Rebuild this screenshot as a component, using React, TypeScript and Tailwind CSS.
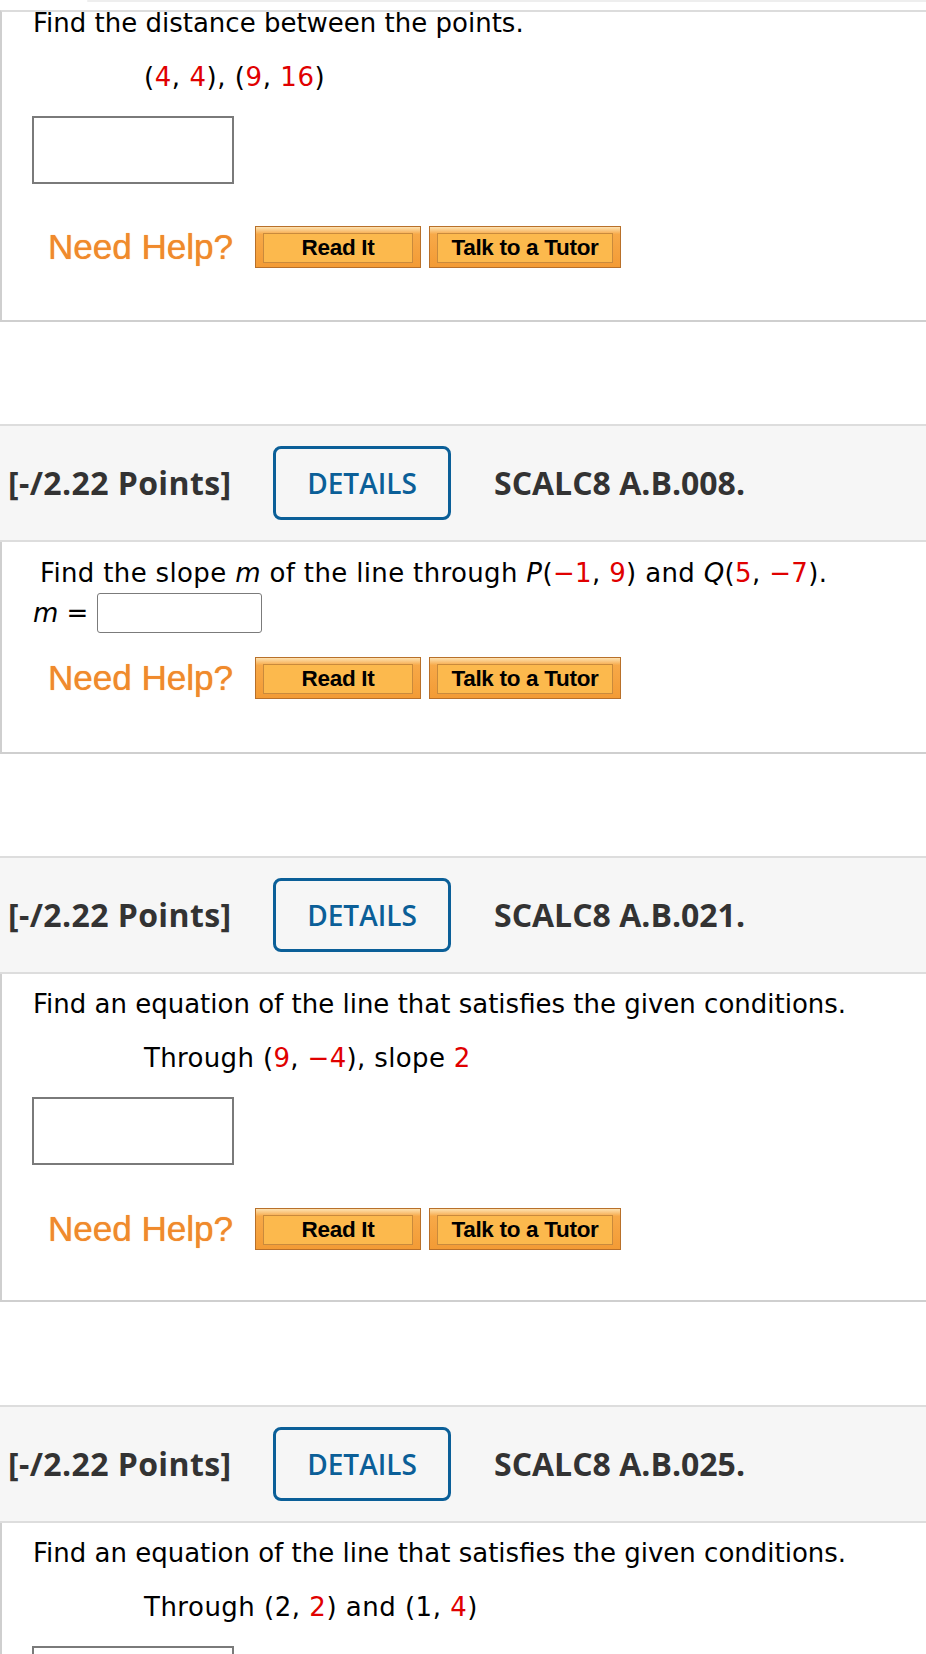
import React from "react";

const R = ({ children }: { children: React.ReactNode }) => (
  <span className="text-[#e00000]">{children}</span>
);

const textCls =
  "font-['DejaVu_Sans',Verdana,sans-serif] text-[26px] text-black whitespace-nowrap";

function OrangeButton({ label, width }: { label: string; width: string }) {
  return (
    <div
      className={`${width} h-[42px] shrink-0 border border-[#b8702a] bg-[linear-gradient(to_bottom,#fde2b2_0%,#f7a948_18%,#f39b35_100%)] pt-[6px] pb-[4px] px-[7px]`}
    >
      <div className="h-full w-full border border-[#c98a3c] bg-[#fcb94d] flex items-center justify-center font-['Liberation_Sans',Arial,sans-serif] font-bold text-[22.5px] text-black leading-none tracking-[-0.3px]">
        {label}
      </div>
    </div>
  );
}

function NeedHelp() {
  return (
    <div className="flex items-center h-[42px]">
      <span className="ml-[46px] w-[207px] shrink-0 font-['Liberation_Sans',Arial,sans-serif] text-[35px] leading-[42px] text-[#f08a2c] [text-shadow:0_0_0.8px_#f08a2c]">
        Need Help?
      </span>
      <OrangeButton label="Read It" width="w-[166px]" />
      <div className="w-[8px] shrink-0" />
      <OrangeButton label="Talk to a Tutor" width="w-[192px]" />
    </div>
  );
}

function Header({ code }: { code: string }) {
  return (
    <div className="h-[118px] border-t-2 border-b-2 border-[#dddddd] bg-[#f6f6f6] flex items-center pl-[8px] font-['Open_Sans',sans-serif]">
      <span className="w-[265px] shrink-0 font-bold text-[32px] tracking-[0.4px] text-[#333333] whitespace-nowrap">
        [-/2.22 Points]
      </span>
      <div className="w-[178px] h-[74px] shrink-0 border-[3px] border-[#0b5f98] rounded-[8px] flex items-center justify-center">
        <span className="font-semibold text-[28px] text-[#0b5f98]">DETAILS</span>
      </div>
      <span className="ml-[43px] font-bold text-[32px] text-[#333333] whitespace-nowrap">
        {code}
      </span>
    </div>
  );
}

function Row({ children, pl, mt }: { children: React.ReactNode; pl: string; mt?: string }) {
  return (
    <div className={`h-[22px] flex items-center ${pl} ${mt ?? ""} ${textCls}`}>
      <span>{children}</span>
    </div>
  );
}

export default function App() {
  return (
    <div className="w-[926px] min-h-[1654px] bg-white overflow-hidden">
      <div className="h-[2px] ml-[87px] bg-[#eeeeee] rounded-l-full" />
      {/* Section 1 body (continuation) */}
      <div className="mt-[8px] border-t-2 border-l-2 border-b-2 border-t-[#dcdcdc] border-l-[#cfcfcf] border-b-[#cfcfcf] pb-[52px]">
        <Row pl="pl-[31px]">Find the distance between the points.</Row>
        <Row pl="pl-[142px]" mt="mt-[32px]">
          <span className="tracking-[0.55px]">
            (<R>4</R>, <R>4</R>), (<R>9</R>, <R>16</R>)
          </span>
        </Row>
        <div className="mt-[28px] ml-[30px] w-[202px] h-[68px] border-2 border-[#7a7a7a] bg-white" />
        <div className="mt-[42px]">
          <NeedHelp />
        </div>
      </div>

      {/* Section 2 */}
      <div className="mt-[102px]">
        <Header code="SCALC8 A.B.008." />
      </div>
      <div className="border-l-2 border-b-2 border-l-[#cfcfcf] border-b-[#cfcfcf] pt-[20px] pb-[53px]">
        <Row pl="pl-[38px]">
          <span className="tracking-[0.35px]">
            Find the slope <i>m</i> of the line through <i>P</i>(<R>−1</R>, <R>9</R>) and{" "}
            <i>Q</i>(<R>5</R>, <R>−7</R>).
          </span>
        </Row>
        <div className={`mt-[9px] h-[40px] flex items-center pl-[31px] ${textCls}`}>
          <span className="w-[64px] shrink-0">
            <i>m</i> =
          </span>
          <div className="w-[165px] h-[40px] rounded-[3px] border-[1.5px] border-[#7b7b7b] bg-white" />
        </div>
        <div className="mt-[24px]">
          <NeedHelp />
        </div>
      </div>

      {/* Section 3 */}
      <div className="mt-[102px]">
        <Header code="SCALC8 A.B.021." />
      </div>
      <div className="border-l-2 border-b-2 border-l-[#cfcfcf] border-b-[#cfcfcf] pt-[19px] pb-[50px]">
        <Row pl="pl-[31px]">Find an equation of the line that satisfies the given conditions.</Row>
        <Row pl="pl-[142px]" mt="mt-[32px]">
          <span className="tracking-[0.35px]">
            Through (<R>9</R>, <R>−4</R>), slope <R>2</R>
          </span>
        </Row>
        <div className="mt-[28px] ml-[30px] w-[202px] h-[68px] border-2 border-[#7a7a7a] bg-white" />
        <div className="mt-[43px]">
          <NeedHelp />
        </div>
      </div>

      {/* Section 4 */}
      <div className="mt-[103px]">
        <Header code="SCALC8 A.B.025." />
      </div>
      <div className="border-l-2 border-l-[#cfcfcf] pt-[19px] pb-[50px]">
        <Row pl="pl-[31px]">Find an equation of the line that satisfies the given conditions.</Row>
        <Row pl="pl-[142px]" mt="mt-[32px]">
          <span className="tracking-[0.5px]">
            Through (2, <R>2</R>) and (1, <R>4</R>)
          </span>
        </Row>
        <div className="mt-[28px] ml-[30px] w-[202px] h-[68px] border-2 border-[#7a7a7a] bg-white" />
      </div>
    </div>
  );
}
